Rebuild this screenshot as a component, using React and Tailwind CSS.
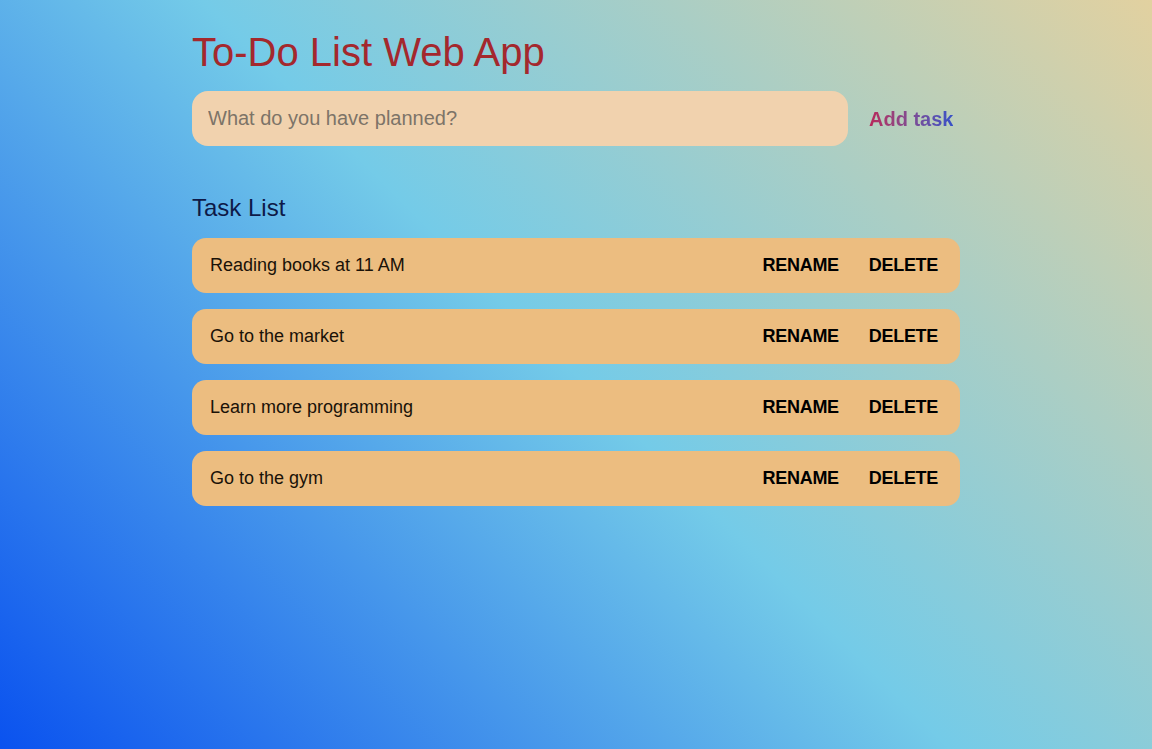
import React, { useState } from 'react';

const initialTasks = [
  'Reading books at 11 AM',
  'Go to the market',
  'Learn more programming',
  'Go to the gym',
];

const TaskItem = ({ name }) => (
  <li className="flex items-center h-[55px] pl-[18px] pr-[22px] rounded-[14px] bg-[#ecbd80]">
    <span className="flex-1 text-[18px] text-[#1a1208]">{name}</span>
    <button className="text-[18px] font-bold text-black tracking-[-0.3px]">RENAME</button>
    <button className="ml-[30px] text-[18px] font-bold text-black tracking-[-0.3px]">DELETE</button>
  </li>
);

export default function App() {
  const [tasks] = useState(initialTasks);
  const [text, setText] = useState('');

  return (
    <div className="min-h-[749px] w-full bg-linear-45/srgb from-[#0a52ef] via-[#74cbe8] via-50% to-[#e2d1a0] font-['Liberation_Sans',Arial,sans-serif]">
      <main className="w-[768px] ml-[192px] pt-[28px]">
        {/* Header */}
        <h1 className="text-[40px] leading-[48px] text-[#a4282d]">To-Do List Web App</h1>

        {/* Add form */}
        <form className="flex items-center mt-[15px]" onSubmit={(e) => e.preventDefault()}>
          <input
            value={text}
            onChange={(e) => setText(e.target.value)}
            placeholder="What do you have planned?"
            className="w-[656px] h-[55px] px-4 rounded-[16px] bg-[#f1d2ae] text-[20px] text-[#333] placeholder:text-[#7d7468] outline-none"
          />
          <button
            type="submit"
            className="ml-[21px] text-[20px] font-bold bg-linear-to-r from-[#b8245a] to-[#3550c8] bg-clip-text text-transparent"
          >
            Add task
          </button>
        </form>

        {/* Task list */}
        <h2 className="mt-[48px] text-[24px] leading-[28px] text-[#0e1a48]">Task List</h2>
        <ul className="mt-[16px] flex flex-col gap-[16px]">
          {tasks.map((t) => (
            <TaskItem key={t} name={t} />
          ))}
        </ul>
      </main>
    </div>
  );
}
